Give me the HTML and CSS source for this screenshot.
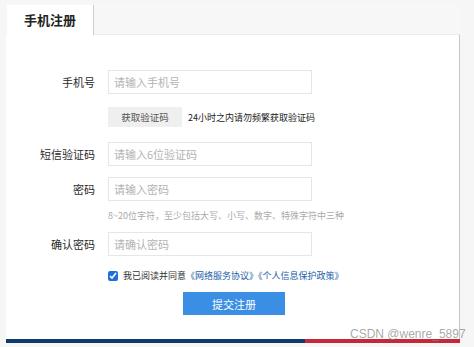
FILE: index.html
```html
<!DOCTYPE html>
<html lang="zh">
<head>
<meta charset="utf-8">
<link rel="stylesheet" href="styles.css">
</head>
<body>
<div class="page">
  <div class="panel">
    <div class="tabs"><div class="tab">手机注册</div></div>
    <div class="content">
      <form class="form">
        <div class="row r1"><label class="label">手机号</label><input class="input" placeholder="请输入手机号"></div>
        <div class="row r2"><span class="label"></span><button type="button" class="code-btn">获取验证码</button><span class="code-tip">24小时之内请勿频繁获取验证码</span></div>
        <div class="row r3"><label class="label">短信验证码</label><input class="input" placeholder="请输入6位验证码"></div>
        <div class="row r4"><label class="label">密码</label><input class="input" placeholder="请输入密码"></div>
        <div class="row hint-row"><span class="label"></span><span class="hint">8~20位字符，至少包括大写、小写、数字、特殊字符中三种</span></div>
        <div class="row r5"><label class="label">确认密码</label><input class="input" placeholder="请确认密码"></div>
        <div class="row agree-row"><span class="label"></span><input type="checkbox" class="check" checked><span class="agree">我已阅读并同意<a class="link">《网络服务协议》</a><a class="link">《个人信息保护政策》</a></span></div>
        <div class="row submit-row"><span class="label"></span><button type="button" class="submit">提交注册</button></div>
      </form>
    </div>
    <div class="bar"><div class="bar-blue"></div><div class="bar-red"></div></div>
  </div>
  <div class="watermark">CSDN @wenre_5897</div>
</div>
</body>
</html>
```
FILE: styles.css
```css
* { box-sizing: border-box; }
html, body { margin: 0; padding: 0; }
body {
  background: #f6f6f6;
  font-family: "Noto Sans CJK SC", "Noto Sans", sans-serif;
  color: #333;
}
.page {
  position: relative;
  width: 474px;
  height: 347px;
  padding: 3px 14px 0 6px;
}
.panel { width: 454px; }
.tabs {
  height: 32px;
  background: #f7f7f7;
  border-bottom: 1px solid #ebebeb;
  display: flex;
  align-items: flex-end;
  padding-left: 1px;
}
.tab {
  width: 87px;
  height: 30px;
  margin-bottom: -1px;
  background: #fff;
  border-right: 1px solid #cfcfcf;
  font-size: 13px;
  font-weight: bold;
  color: #222;
  display: flex;
  align-items: center;
  justify-content: center;
  padding-bottom: 2px;
}
.content {
  height: 304px;
  background: #fff;
  border-right: 1px solid #c6c6c6;
  padding-top: 35px;
}
.form { display: flex; flex-direction: column; }
.row { display: flex; align-items: center; }
.label {
  width: 89px;
  margin-right: 13px;
  text-align: right;
  font-size: 11px;
  color: #2a2a2a;
  flex: none;
}
.input {
  width: 204px;
  height: 24px;
  border: 1px solid #e6e6e6;
  padding: 0 0 0 5px;
  font-family: inherit;
  font-size: 11px;
  color: #333;
  outline: none;
}
.input::placeholder { color: #b3b3b3; }
.r2 { margin-top: 13px; }
.r3 { margin-top: 15px; }
.r4 { margin-top: 11px; }
.hint-row { margin-top: 9px; }
.r5 { margin-top: 10px; }
.agree-row { margin-top: 13px; }
.submit-row { margin-top: 9px; }
.code-btn {
  width: 74px;
  height: 20px;
  border: none;
  background: #efefef;
  font-family: inherit;
  font-size: 9.5px;
  color: #555;
  padding: 0;
}
.code-tip {
  margin-left: 6px;
  font-size: 9px;
  color: #222;
}
.hint {
  font-size: 9px;
  line-height: 12px;
  color: #aaa;
}
.check {
  width: 10px;
  height: 10px;
  margin: 0 5px 0 0;
  accent-color: #1f6fd8;
}
.agree {
  font-size: 9px;
  line-height: 14px;
  color: #333;
}
.link { color: #1d5ea8; }
.submit {
  margin-left: 75px;
  width: 102px;
  height: 23px;
  border: none;
  background: #3a8ee4;
  color: #fff;
  font-family: inherit;
  font-size: 11px;
  padding: 0;
}
.bar { display: flex; height: 4px; }
.bar-blue { width: 299px; background: #0e3b6c; }
.bar-red { flex: 1; background: #c52838; }
.watermark {
  position: absolute;
  left: 350px;
  top: 327px;
  white-space: nowrap;
  font-family: "Liberation Sans", Arial, sans-serif;
  font-size: 12px;
  line-height: 14px;
  color: rgba(130,130,130,0.7);
}
```
